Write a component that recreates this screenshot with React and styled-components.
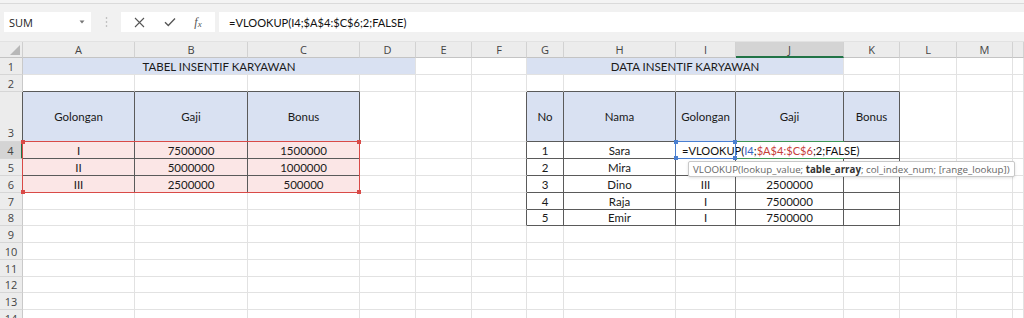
import styled, { createGlobalStyle } from "styled-components";

const GlobalStyle = createGlobalStyle`
  html, body {
    margin: 0;
    padding: 0;
    background: #fff;
  }
  body {
    font-family: Lato, "Liberation Sans", sans-serif;
    overflow: hidden;
  }
`;

const COLS = [
    { id: "A", w: 112 },
    { id: "B", w: 113 },
    { id: "C", w: 112 },
    { id: "D", w: 56 },
    { id: "E", w: 56 },
    { id: "F", w: 55 },
    { id: "G", w: 37 },
    { id: "H", w: 112 },
    { id: "I", w: 60 },
    { id: "J", w: 108 },
    { id: "K", w: 56 },
    { id: "L", w: 57 },
    { id: "M", w: 56 },
    { id: "N", w: 0 },
];

const ROW_H = [17, 17, 50, 17, 17, 17, 17, 16, 17, 17, 17, 16, 17, 17];

const FILLS = {
    blue: "#d9e1f2",
    pink: "#fbe6e6",
};

const GRID = "#e2e2e2";
const DARK = "#5a5a5a";

// I5 / J5 sit under the formula tooltip, so they are left blank here
const CELLS = {
    A1: { text: "TABEL INSENTIF KARYAWAN", span: 4, fill: "blue" },
    G1: { text: "DATA INSENTIF KARYAWAN", span: 4, fill: "blue" },
    A3: { text: "Golongan", fill: "blue" },
    B3: { text: "Gaji", fill: "blue" },
    C3: { text: "Bonus", fill: "blue" },
    A4: { text: "I", fill: "pink" },
    B4: { text: "7500000", fill: "pink" },
    C4: { text: "1500000", fill: "pink" },
    A5: { text: "II", fill: "pink" },
    B5: { text: "5000000", fill: "pink" },
    C5: { text: "1000000", fill: "pink" },
    A6: { text: "III", fill: "pink" },
    B6: { text: "2500000", fill: "pink" },
    C6: { text: "500000", fill: "pink" },
    G3: { text: "No", fill: "blue" },
    H3: { text: "Nama", fill: "blue" },
    I3: { text: "Golongan", fill: "blue" },
    J3: { text: "Gaji", fill: "blue" },
    K3: { text: "Bonus", fill: "blue" },
    G4: { text: "1" },
    H4: { text: "Sara" },
    G5: { text: "2" },
    H5: { text: "Mira" },
    G6: { text: "3" },
    H6: { text: "Dino" },
    I6: { text: "III" },
    J6: { text: "2500000" },
    G7: { text: "4" },
    H7: { text: "Raja" },
    I7: { text: "I" },
    J7: { text: "7500000" },
    G8: { text: "5" },
    H8: { text: "Emir" },
    I8: { text: "I" },
    J8: { text: "7500000" },
};

const MERGED = ["B1", "C1", "D1", "H1", "I1", "J1"];

const inTable = (r, c) =>
    (r >= 3 && r <= 6 && c >= 1 && c <= 3) || (r >= 3 && r <= 8 && c >= 7 && c <= 11);

/* ---------- ribbon + formula bar ---------- */

const Page = styled.div`
    width: 1024px;
    height: 318px;
    overflow: hidden;
    background: #fff;
`;

const RibbonEdge = styled.div`
    height: 3px;
    background: #f3f3f3;
    border-bottom: 1px solid #dadada;
`;

const FormulaBar = styled.div`
    display: flex;
    align-items: center;
    height: 38px;
    box-sizing: border-box;
    padding: 5px 0 6px 4px;
    background: #f1f1f1;
    border-bottom: 1px solid #e2e2e2;
`;

const NameBox = styled.div`
    width: 87px;
    height: 20px;
    box-sizing: border-box;
    background: #fff;
    display: flex;
    align-items: center;
    justify-content: space-between;
    padding: 0 6px 0 5px;
    font: 11px "Open Sans", sans-serif;
    color: #222;
`;

const Grip = styled.div`
    width: 30px;
    display: flex;
    justify-content: center;
`;

const IconBox = styled.div`
    width: 94px;
    height: 20px;
    box-sizing: border-box;
    background: #fff;
    display: flex;
    align-items: center;
    justify-content: space-around;
    padding: 0 4px;
    color: #555;
`;

const FxGlyph = styled.span`
    font: italic 12px "Liberation Serif", serif;
    color: #555;

    sub {
        font-size: 9px;
        vertical-align: -1px;
    }
`;

const FormulaInput = styled.div`
    flex: 1;
    height: 20px;
    margin-left: 4px;
    box-sizing: border-box;
    background: #fff;
    display: flex;
    align-items: center;
    padding-left: 10px;
    font-size: 11.1px;
    color: #111;
    white-space: nowrap;
`;

/* ---------- sheet grid ---------- */

const Sheet = styled.div`
    display: grid;
    grid-template-columns: 23px ${COLS.slice(0, -1).map(c => `${c.w}px`).join(" ")} 1fr;
    grid-template-rows: 16px ${ROW_H.map(h => `${h}px`).join(" ")};
`;

const Corner = styled.div`
    grid-row: 1;
    grid-column: 1;
    background: #ececec;
    border-right: 1px solid #cfcfcf;
    border-bottom: 1px solid #c4c4c4;
    display: flex;
    align-items: flex-end;
    justify-content: flex-end;
    padding: 0 2px 2px 0;
`;

const ColHead = styled.div`
    grid-row: 1;
    grid-column: ${p => p.$col + 1};
    box-sizing: border-box;
    background: ${p => (p.$active ? "#d4d4d4" : "#ececec")};
    border-right: 1px solid #d2d2d2;
    border-bottom: ${p => (p.$active ? "2px solid #217346" : "1px solid #c4c4c4")};
    display: flex;
    align-items: center;
    justify-content: center;
    font: 11px "Open Sans", sans-serif;
    color: #444;
`;

const RowHead = styled.div`
    grid-row: ${p => p.$row + 1};
    grid-column: 1;
    box-sizing: border-box;
    background: ${p => (p.$active ? "#d4d4d4" : "#ececec")};
    border-bottom: 1px solid #d6d6d6;
    border-right: ${p => (p.$active ? "2px solid #217346" : `1px solid ${p.$dark ? DARK : "#c9c9c9"}`)};
    display: flex;
    justify-content: center;
    align-items: ${p => (p.$tall ? "flex-end" : "center")};
    padding-bottom: ${p => (p.$tall ? "1px" : "0")};
    font: 11px "Open Sans", sans-serif;
    color: #444;
`;

const Cell = styled.div`
    grid-row: ${p => p.$row + 1};
    grid-column: ${p => p.$col + 1} / span ${p => p.$span};
    box-sizing: border-box;
    min-width: 0;
    border-right: 1px solid ${p => (p.$rd ? DARK : GRID)};
    border-bottom: 1px solid ${p => (p.$bd ? DARK : GRID)};
    background: ${p => FILLS[p.$fill] || "#fff"};
    display: flex;
    align-items: center;
    justify-content: center;
    font-size: 11.5px;
    color: #1a1a1a;
    white-space: nowrap;
    overflow: hidden;
`;

const RangeBox = styled.div`
    grid-row: 5 / 8;
    grid-column: 2 / 5;
    margin: -1px 0 0 -1px;
    border: 1px solid #d94a47;
    position: relative;
    z-index: 2;
    pointer-events: none;
`;

const Handle = styled.span`
    position: absolute;
    width: 4px;
    height: 4px;
    background: ${p => p.$color};
    ${p => (p.$top ? "top: -2px;" : "bottom: -2px;")}
    ${p => (p.$left ? "left: -2px;" : "right: -2px;")}
`;

const EditBox = styled.div`
    grid-row: 5;
    grid-column: 10 / 13;
    margin: 0 1px 1px 0;
    background: #fff;
    z-index: 1;
    display: flex;
    align-items: center;
    padding-left: 6px;
    font-size: 11.1px;
    color: #111;
    white-space: nowrap;
`;

const RefText = styled.span`
    color: ${p => p.$color};
`;

const RefBox = styled.div`
    grid-row: 5;
    grid-column: 10;
    margin: -1px 0 0 -1px;
    border: 1px solid #4a7fd0;
    position: relative;
    z-index: 3;
`;

const ActiveBox = styled.div`
    grid-row: 5;
    grid-column: 11;
    margin-top: -1px;
    border-top: 1px solid #3f9655;
    border-bottom: 1px solid #3f9655;
    position: relative;
    z-index: 2;
`;

const Tooltip = styled.div`
    grid-row: 6;
    grid-column: 10 / 15;
    justify-self: start;
    align-self: start;
    margin: 2px 0 0 12px;
    height: 16px;
    box-sizing: border-box;
    padding: 0 4px;
    display: flex;
    align-items: center;
    background: #fff;
    border: 1px solid #c8c8c8;
    border-radius: 2px;
    box-shadow: 0 1px 3px rgba(0, 0, 0, 0.12);
    z-index: 4;
    font: 9.75px "Open Sans", sans-serif;
    color: #666;
    white-space: nowrap;

    b {
        color: #333;
    }
`;

function SheetCells() {
    const out = [];
    for (let r = 1; r <= ROW_H.length; r++) {
        for (let c = 1; c <= COLS.length; c++) {
            const key = `${COLS[c - 1].id}${r}`;
            if (MERGED.includes(key)) continue;
            const data = CELLS[key];
            const span = data?.span || 1;
            const lastCol = c + span - 1;
            out.push(
                <Cell
                    key={key}
                    $row={r}
                    $col={c}
                    $span={span}
                    $fill={data?.fill}
                    $rd={inTable(r, lastCol) || inTable(r, lastCol + 1)}
                    $bd={inTable(r, c) || inTable(r + 1, c)}
                >
                    {data?.text}
                </Cell>
            );
        }
    }
    return out;
}

export default function App() {
    return (
        <Page>
            <GlobalStyle />
            <RibbonEdge />
            <FormulaBar>
                <NameBox>
                    SUM
                    <svg width="6" height="4" viewBox="0 0 6 4">
                        <path d="M0.5 0.5 L3 3.5 L5.5 0.5 Z" fill="#777" />
                    </svg>
                </NameBox>
                <Grip>
                    <svg width="3" height="12" viewBox="0 0 3 12">
                        <circle cx="1.5" cy="2" r="0.8" fill="#aaa" />
                        <circle cx="1.5" cy="6" r="0.8" fill="#aaa" />
                        <circle cx="1.5" cy="10" r="0.8" fill="#aaa" />
                    </svg>
                </Grip>
                <IconBox>
                    <svg width="11" height="11" viewBox="0 0 11 11">
                        <path d="M1 1 L10 10 M10 1 L1 10" stroke="#555" strokeWidth="1.1" />
                    </svg>
                    <svg width="12" height="10" viewBox="0 0 12 10">
                        <path d="M1 5.2 L4.3 8.5 L11 1.5" stroke="#555" strokeWidth="1.3" fill="none" />
                    </svg>
                    <FxGlyph>
                        f<sub>x</sub>
                    </FxGlyph>
                </IconBox>
                <FormulaInput>=VLOOKUP(I4;$A$4:$C$6;2;FALSE)</FormulaInput>
            </FormulaBar>

            <Sheet>
                <Corner>
                    <svg width="10" height="10" viewBox="0 0 10 10">
                        <path d="M10 0 L10 10 L0 10 Z" fill="#b8b8b8" />
                    </svg>
                </Corner>
                {COLS.map((col, i) => (
                    <ColHead key={col.id} $col={i + 1} $active={col.id === "J"}>
                        {col.w ? col.id : ""}
                    </ColHead>
                ))}
                {ROW_H.map((h, i) => (
                    <RowHead
                        key={i}
                        $row={i + 1}
                        $tall={h > 20}
                        $active={i + 1 === 4}
                        $dark={inTable(i + 1, 1)}
                    >
                        {i + 1}
                    </RowHead>
                ))}
                <SheetCells />

                <RangeBox>
                    <Handle $color="#d94a47" $top $left />
                    <Handle $color="#d94a47" $top />
                    <Handle $color="#d94a47" $left />
                    <Handle $color="#d94a47" />
                </RangeBox>
                <EditBox>
                    =VLOOKUP(<RefText $color="#3565c0">I4</RefText>;
                    <RefText $color="#c7403b">$A$4:$C$6</RefText>;2;FALSE)
                </EditBox>
                <RefBox>
                    <Handle $color="#4a7fd0" $top $left />
                    <Handle $color="#4a7fd0" $top />
                    <Handle $color="#4a7fd0" $left />
                    <Handle $color="#4a7fd0" />
                </RefBox>
                <ActiveBox />
                <Tooltip>
                    VLOOKUP(lookup_value;&nbsp;<b>table_array</b>; col_index_num; [range_lookup])
                </Tooltip>
            </Sheet>
        </Page>
    );
}
